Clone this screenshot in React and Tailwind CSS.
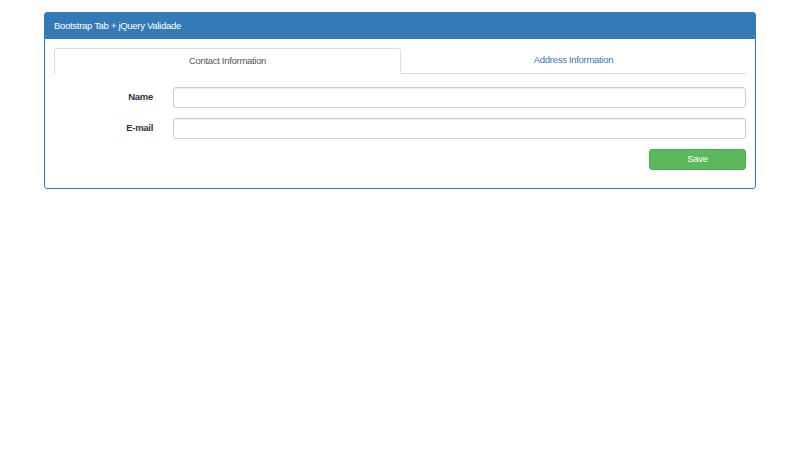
export default function App() {
  return (
    <div className="min-h-[450px] bg-white pt-3 px-[44px] tracking-[-0.3px]" style={{ fontFamily: '"Liberation Sans", Arial, sans-serif' }}>
      {/* Panel */}
      <div className="rounded-[3px] border border-[#337ab7] bg-white">
        <div className="h-[26px] flex items-center px-[9px] bg-[#337ab7] text-white text-[9.5px]">
          Bootstrap Tab + jQuery Validade
        </div>

        <div className="px-[9px] pt-[9px] pb-[18px]">
          {/* Tabs */}
          <div className="flex text-[9.5px]">
            <div className="flex-1 h-[26px] flex items-center justify-center rounded-t-[3px] border border-b-0 border-[#ddd] text-[#555]">
              Contact Information
            </div>
            <div className="flex-1 h-[26px] flex items-center justify-center border-b border-[#ddd] text-[#3a78b0]">
              Address Information
            </div>
          </div>

          {/* Form */}
          <div className="mt-[13px] flex flex-col gap-[10px] text-[9.5px]">
            <div className="flex items-center gap-5">
              <label className="w-[99px] text-right font-bold text-[#333]">Name</label>
              <input className="flex-1 h-[21px] rounded-[3px] border border-[#ccc] shadow-[inset_0_1px_1px_rgba(0,0,0,0.075)] outline-none" />
            </div>
            <div className="flex items-center gap-5">
              <label className="w-[99px] text-right font-bold text-[#333]">E-mail</label>
              <input className="flex-1 h-[21px] rounded-[3px] border border-[#ccc] shadow-[inset_0_1px_1px_rgba(0,0,0,0.075)] outline-none" />
            </div>
            <div className="flex justify-end">
              <button className="w-[97px] h-[21px] rounded-[3px] border border-[#4cae4c] bg-[#5cb85c] text-white text-[9.5px]">
                Save
              </button>
            </div>
          </div>
        </div>
      </div>
    </div>
  )
}
